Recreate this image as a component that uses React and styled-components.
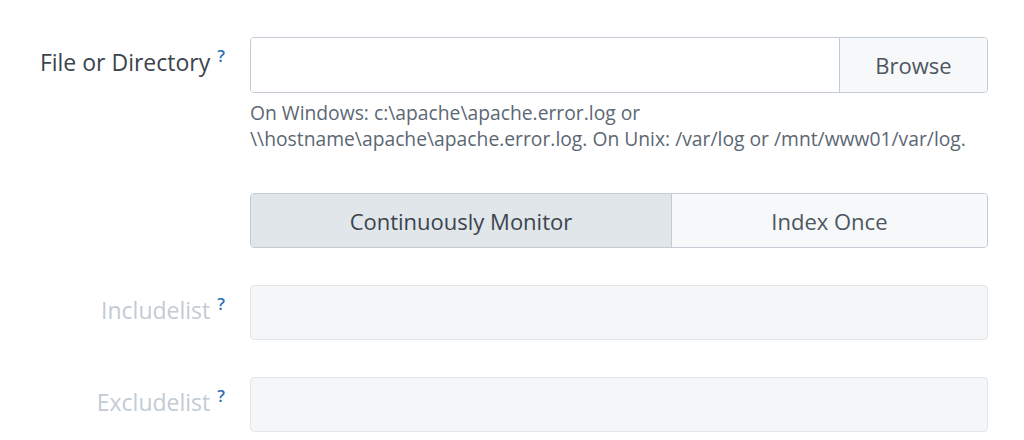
import React from 'react'
import styled, { createGlobalStyle } from 'styled-components'

const GlobalStyle = createGlobalStyle`
  body {
    margin: 0;
    background: #ffffff;
    font-family: "Open Sans", "Liberation Sans", Arial, sans-serif;
  }
`

const Form = styled.div`
  padding-top: 37px;
  width: 1024px;
`

const Row = styled.div`
  display: grid;
  grid-template-columns: 250px 738px;
  margin-top: ${(p) => p.$gap || 0}px;
`

const Label = styled.div`
  text-align: right;
  padding: 11px 25px 0 0;
  font-size: 23px;
  line-height: 28px;
  color: ${(p) => (p.$disabled ? '#c3cbd4' : '#3c444d')};
  white-space: nowrap;
`

const Help = styled.sup`
  font-size: 17px;
  font-weight: 600;
  color: #2f6fb3;
  position: relative;
  top: -9px;
  margin-left: 7px;
  vertical-align: baseline;
`

const InputGroup = styled.div`
  display: flex;
  height: 56px;
  box-sizing: border-box;
  border: 1px solid #c3cbd4;
  border-radius: 4px;
  overflow: hidden;
`

const TextInput = styled.div`
  flex: 1;
  background: #ffffff;
`

const AddonButton = styled.div`
  width: 147px;
  display: flex;
  align-items: center;
  justify-content: center;
  background: #f7f8fa;
  border-left: 1px solid #c3cbd4;
  font-size: 22px;
  color: #4d565f;
`

const HelpText = styled.div`
  margin-top: 7px;
  font-size: 19.3px;
  line-height: 26px;
  color: #5c6773;
`

const Toggle = styled.div`
  display: flex;
  height: 55px;
  box-sizing: border-box;
  border: 1px solid #c3cbd4;
  border-radius: 4px;
  overflow: hidden;
`

const ToggleButton = styled.div`
  flex: ${(p) => p.$grow};
  display: flex;
  align-items: center;
  justify-content: center;
  font-size: 22px;
  color: ${(p) => (p.$active ? '#3c444d' : '#4d565f')};
  background: ${(p) => (p.$active ? '#e1e6eb' : '#f7f8fa')};
  & + & {
    border-left: 1px solid #c3cbd4;
  }
`

const DisabledInput = styled.div`
  height: 55px;
  box-sizing: border-box;
  background: #f5f6f8;
  border: 1px solid #e1e6eb;
  border-radius: 4px;
`

export default function App() {
  return (
    <Form>
      <GlobalStyle />
      <Row>
        <Label>
          File or Directory<Help>?</Help>
        </Label>
        <div>
          <InputGroup>
            <TextInput />
            <AddonButton>Browse</AddonButton>
          </InputGroup>
          <HelpText>
            On Windows: c:\apache\apache.error.log or
            <br />
            \\hostname\apache\apache.error.log. On Unix: /var/log or /mnt/www01/var/log.
          </HelpText>
        </div>
      </Row>
      <Row $gap={41}>
        <div />
        <Toggle>
          <ToggleButton $active $grow={421}>Continuously Monitor</ToggleButton>
          <ToggleButton $grow={316}>Index Once</ToggleButton>
        </Toggle>
      </Row>
      <Row $gap={37}>
        <Label $disabled>
          Includelist<Help>?</Help>
        </Label>
        <DisabledInput />
      </Row>
      <Row $gap={37}>
        <Label $disabled>
          Excludelist<Help>?</Help>
        </Label>
        <DisabledInput />
      </Row>
    </Form>
  )
}
